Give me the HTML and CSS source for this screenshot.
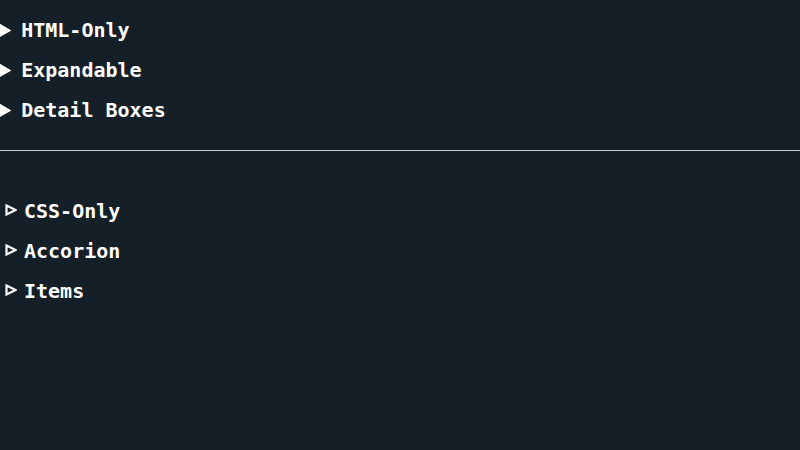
FILE: index.html
```html
<!DOCTYPE html>
<html lang="en">

<head>
    <meta charset="UTF-8">
    <meta name="viewport" content="width=device-width, initial-scale=1.0">
    <title>Expandable Details</title>
    <link rel="stylesheet" href="styles.css">
</head>

<body>
    <section class="group html-only">
        <details>
            <summary>HTML-Only</summary>
        </details>
        <details>
            <summary>Expandable</summary>
        </details>
        <details>
            <summary>Detail Boxes</summary>
        </details>
    </section>

    <hr>

    <section class="group css-only">
        <details>
            <summary>
                <svg class="marker" viewBox="0 0 12 12"><polygon points="1.5,1.5 10.5,6 1.5,10.5" /></svg>CSS-Only
            </summary>
        </details>
        <details>
            <summary>
                <svg class="marker" viewBox="0 0 12 12"><polygon points="1.5,1.5 10.5,6 1.5,10.5" /></svg>Accorion
            </summary>
        </details>
        <details>
            <summary>
                <svg class="marker" viewBox="0 0 12 12"><polygon points="1.5,1.5 10.5,6 1.5,10.5" /></svg>Items
            </summary>
        </details>
    </section>
</body>

</html>
```

FILE: styles.css
```css
body {
    margin: 0;
    background-color: #141f27;
    color: #fff;
    font-family: "DejaVu Sans Mono", monospace;
    font-size: 20px;
    font-weight: bold;
}

.group {
    padding: 10px 0 20px;
}

.css-only {
    padding-top: 40px;
}

summary {
    line-height: 40px;
    cursor: pointer;
}

hr {
    margin: 0;
    border: none;
    border-top: 1px solid #c8ccd0;
}

.css-only summary {
    list-style: none;
    display: flex;
    align-items: center;
    padding-left: 5px;
}

.css-only summary::-webkit-details-marker {
    display: none;
}

.marker {
    width: 12px;
    height: 12px;
    margin: 0 7px 2px 0;
    fill: none;
    stroke: #fff;
    stroke-width: 2.2;
    stroke-linejoin: miter;
}

.css-only details[open] .marker {
    transform: rotate(90deg);
}
```
